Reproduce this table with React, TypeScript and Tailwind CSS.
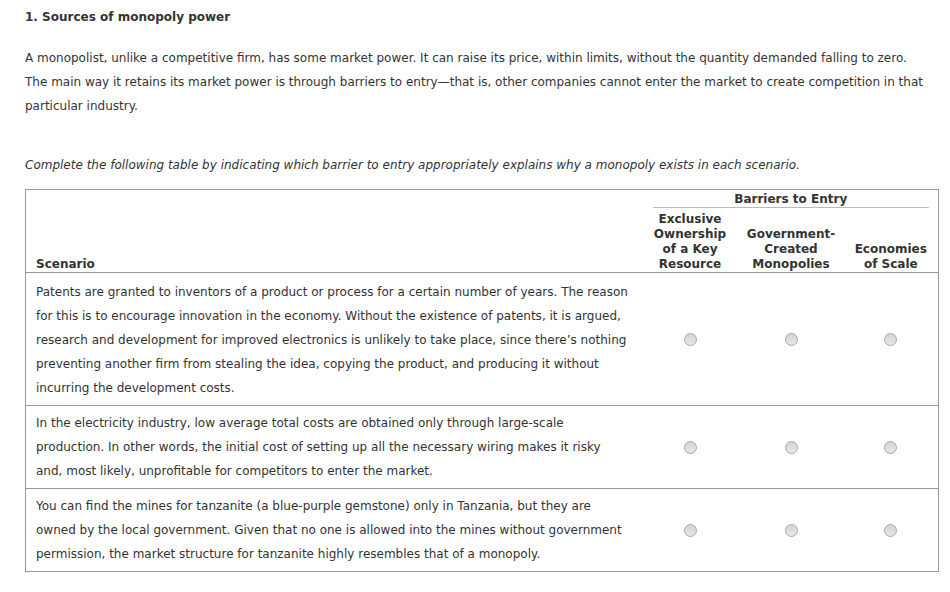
import React from 'react';

const rows = [
  [
    'Patents are granted to inventors of a product or process for a certain number of years. The reason for this is to encourage innovation in the economy. Without the existence of patents, it is argued, research and development for improved electronics is unlikely to take place, since there’s nothing preventing another firm from stealing the idea, copying the product, and producing it without incurring the development costs.',
  ],
  [
    'In the electricity industry, low average total costs are obtained only through large-scale production. In other words, the initial cost of setting up all the necessary wiring makes it risky and, most likely, unprofitable for competitors to enter the market.',
  ],
  [
    'You can find the mines for tanzanite (a blue-purple gemstone) only in Tanzania, but they are owned by the local government. Given that no one is allowed into the mines without government permission, the market structure for tanzanite highly resembles that of a monopoly.',
  ],
];

function Radio() {
  return (
    <span className="inline-block w-[13px] h-[13px] rounded-full border border-[#a9a9a9] bg-gradient-to-b from-[#d4d4d4] to-[#e8e8e8] align-middle" />
  );
}

export default function App() {
  return (
    <div className="min-h-screen bg-white text-[#333] text-[12px] pl-[25px] pr-[12px] pt-[8px]" style={{ fontFamily: 'Verdana, "DejaVu Sans", sans-serif' }}>
      <h1 className="font-bold text-[12px] leading-[18px]">1. Sources of monopoly power</h1>
      <p className="mt-[20px] leading-[24px] pr-[10px]">
        A monopolist, unlike a competitive firm, has some market power. It can raise its price, within limits, without the quantity demanded falling to zero. The main way it retains its market power is through barriers to entry—that is, other companies cannot enter the market to create competition in that particular industry.
      </p>
      <p className="mt-[35px] italic leading-[24px]">
        Complete the following table by indicating which barrier to entry appropriately explains why a monopoly exists in each scenario.
      </p>
      <table className="mt-[12px] w-[913px] border-collapse border border-[#999] table-fixed">
        <colgroup>
          <col className="w-[614px]" />
          <col className="w-[101px]" />
          <col className="w-[101px]" />
          <col className="w-[97px]" />
        </colgroup>
        <thead>
          <tr>
            <th rowSpan={2} className="text-left align-bottom font-bold px-[10px] pb-0 leading-[15px]">Scenario</th>
            <th colSpan={3} className="pt-[2px] font-bold leading-[15px]">
              <div className="ml-[13px] mr-[9px] border-b border-[#bbb]">Barriers to Entry</div>
            </th>
          </tr>
          <tr className="border-b border-[#999]">
            <th className="align-bottom font-bold leading-[15px] pt-[4px] pb-0">Exclusive<br />Ownership<br />of a Key<br />Resource</th>
            <th className="align-bottom font-bold leading-[15px] pb-0">Government-<br />Created<br />Monopolies</th>
            <th className="align-bottom font-bold leading-[15px] pb-0 pl-[2px]">Economies<br />of Scale</th>
          </tr>
        </thead>
        <tbody>
          {rows.map((r, i) => (
            <tr key={i} className="border-b border-[#999]">
              <td className={`pl-[10px] pr-[10px] ${i === 0 ? 'pt-[7px]' : 'pt-[5px]'} pb-[5px] leading-[24px] align-middle`}>{r[0]}</td>
              <td className="text-center align-middle"><Radio /></td>
              <td className="text-center align-middle"><Radio /></td>
              <td className="text-center align-middle pl-[2px]"><Radio /></td>
            </tr>
          ))}
        </tbody>
      </table>
    </div>
  );
}
